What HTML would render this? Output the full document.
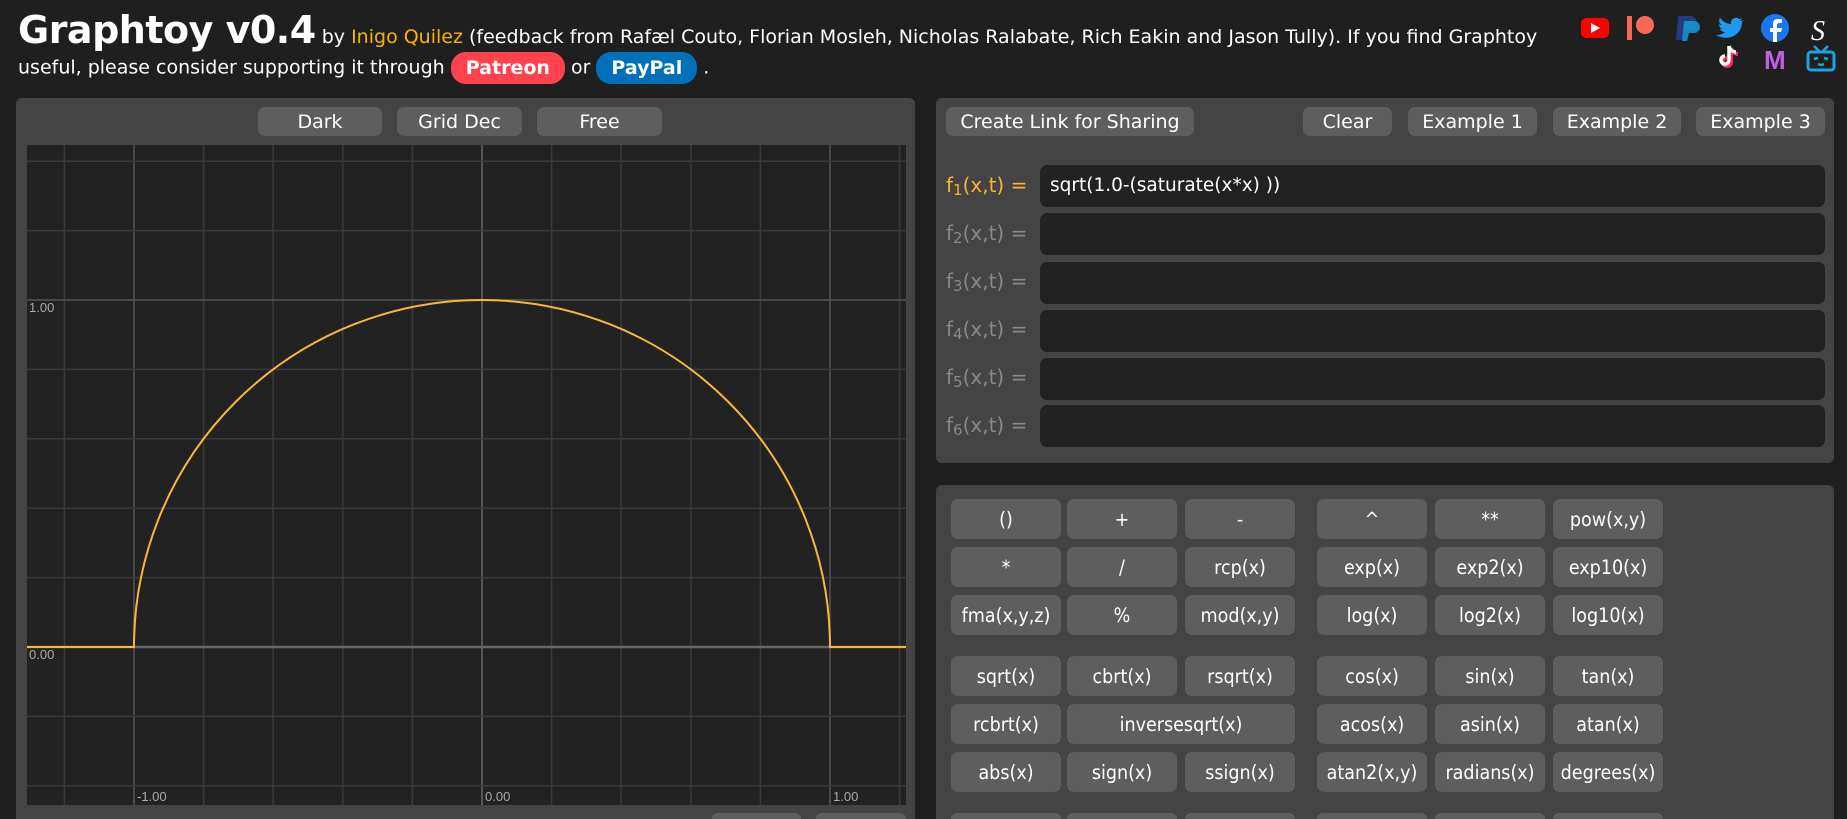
<!DOCTYPE html>
<html><head><meta charset="utf-8"><style>
*{box-sizing:border-box;margin:0;padding:0}
html{width:1847px;height:819px;overflow:hidden}
body{width:1847px;height:819px;background:#1f1f1f;overflow:hidden;font-family:"DejaVu Sans","Liberation Sans",sans-serif;color:#fff;position:relative}
.hdr{position:absolute;left:18px;top:15px;font-size:19px;line-height:30px;width:1560px}
.hdr b.t{font-size:38px;font-weight:bold;letter-spacing:-0.5px}
.or{color:#f8b500}
.pill{display:inline-block;border-radius:15px;padding:0 15px;font-weight:bold;line-height:32px;height:32px;vertical-align:middle}
.panel{position:absolute;background:#444;border-radius:6px}
.btn{position:absolute;background:#5e5e5e;border-radius:7px;color:#fff;font-size:19px;text-align:center;line-height:30px;height:29px}
.k{position:absolute;background:#5e5e5e;border-radius:7px;color:#fff;font-size:19.5px;text-align:center;line-height:41px;height:40px;width:110px;font-family:"DejaVu Sans Condensed","DejaVu Sans",sans-serif}
.lab{position:absolute;left:946px;font-size:20px;color:#888;font-family:"DejaVu Sans","Liberation Sans",sans-serif}
.lab sub{font-size:15px;vertical-align:-3px}
.inp{position:absolute;left:1040px;width:785px;height:42px;background:#222;border-radius:7px;font-size:18.5px;line-height:42px;padding-left:10px;font-family:"DejaVu Sans","Liberation Sans",sans-serif}
</style></head><body>
<div class="hdr"><b class="t">Graphtoy v0.4</b> by <span class="or">Inigo Quilez</span> (feedback from Rafæl Couto, Florian Mosleh, Nicholas Ralabate, Rich Eakin and Jason Tully). If you find Graphtoy<br>useful, please consider supporting it through <span class="pill" style="background:#ff424d">Patreon</span> or <span class="pill" style="background:#0070ba">PayPal</span> .</div>

<svg style="position:absolute;left:0;top:0" width="1847" height="80">
<rect x="1581" y="18" width="28" height="20" rx="5" fill="#f00"/><path d="M1591 23 L1600 28 L1591 33Z" fill="#fff"/>
<rect x="1627" y="16" width="5" height="24" fill="#f96854"/><circle cx="1645" cy="25" r="9" fill="#f96854"/>
<path d="M1678 16 h12 a7 7 0 0 1 0 14 h-6 l-2 10 h-6z" fill="#253b80"/><path d="M1684 21 h10 a6 6 0 0 1 0 12 h-5 l-2 8 h-5z" fill="#179bd7" opacity=".85"/>
<path d="M1744 20 c-2 1-3 1-4 1 c1-1 2-2 2-3 c-1 1-2 1-3 1 c-3-3-9 0-8 5 c-5 0-8-3-11-6 c-2 3 0 6 2 7 c-1 0-2 0-3-1 c0 3 2 5 4 5 c-1 0-2 0-3 0 c1 2 3 3 5 3 c-2 2-5 3-9 3 c12 7 26 0 26-13 c1-1 2-2 2-2z" fill="#1d9bf0"/>
<circle cx="1775" cy="28" r="14" fill="#1877f2"/><path d="M1777 42 v-10 h4 l1-4 h-5 v-3 c0-1 1-2 2-2 h3 v-4 h-4 c-4 0-5 2-5 5 v4 h-3 v4 h3 v10z" fill="#fff"/>
<text x="1811" y="40" font-family="Liberation Serif,serif" font-style="italic" font-size="28" fill="#fff">S</text>
<path d="M1731 48 v14 a4 4 0 1 1-4-4 M1731 48 c1 4 4 6 7 6" stroke="#fe2c55" stroke-width="4" fill="none"/>
<path d="M1729 46 v14 a4 4 0 1 1-4-4 M1729 46 c1 4 4 6 7 6" stroke="#fff" stroke-width="3.5" fill="none"/>
<text x="1764" y="69" font-family="Liberation Sans,sans-serif" font-weight="bold" font-size="26" fill="#c061e0">M</text>
<rect x="1808" y="52" width="26" height="18" rx="3" stroke="#1fa3e0" stroke-width="3" fill="none"/><path d="M1814 46 l5 5 M1828 46 l-5 5 M1814 59 l4-1 M1828 59 l-4-1 M1818 64 l3 1 l3-1" stroke="#1fa3e0" stroke-width="2.5" fill="none"/>
</svg>

<div class="panel" style="left:16px;top:98px;width:899px;height:721px;border-radius:6px 6px 0 0"></div>
<div class="btn" style="left:258px;top:107px;width:124px">Dark</div>
<div class="btn" style="left:397px;top:107px;width:125px">Grid Dec</div>
<div class="btn" style="left:537px;top:107px;width:125px">Free</div>
<svg style="position:absolute;left:27px;top:145px" width="879" height="660">
<rect width="879" height="660" fill="#222"/>
<g id="gx"></g>
<g fill="#aaa" font-family="Liberation Sans Narrow,Liberation Sans,sans-serif" font-size="13">
<text x="2" y="167">1.00</text><text x="2" y="514">0.00</text>
<text x="110" y="656">-1.00</text><text x="458" y="656">0.00</text><text x="806" y="656">1.00</text></g>
<path d="M0 502 H107 A348 347 0 0 1 803 502 H879" stroke="#f6b83a" stroke-width="2" fill="none"/>
</svg>
<script>
var s='';var ox=455,oy=502,u=69.6;
for(var k=-7;k<=6;k++){var x=ox+k*u;if(x<0||x>879)continue;var c=(k==0)?'#666':(k%5==0?'#555':'#3a3a3a');s+='<line x1="'+x+'" y1="0" x2="'+x+'" y2="660" stroke="'+c+'" stroke-width="1.5"/>';}
for(var k=-3;k<=8;k++){var y=oy-k*69.4;if(y<0||y>660)continue;var c=(k==0)?'#666':(k%5==0?'#555':'#3a3a3a');s+='<line x1="0" y1="'+y+'" x2="879" y2="'+y+'" stroke="'+c+'" stroke-width="'+(k==0?2.5:1.5)+'"/>';}
document.getElementById('gx').innerHTML=s;
</script>
<div class="btn" style="left:712px;top:813px;width:89px;height:6px;border-radius:7px 7px 0 0"></div>
<div class="btn" style="left:816px;top:813px;width:90px;height:6px;border-radius:7px 7px 0 0"></div>

<div class="panel" style="left:936px;top:98px;width:898px;height:365px"></div>
<div class="btn" style="left:946px;top:107px;width:248px">Create Link for Sharing</div>
<div class="btn" style="left:1303px;top:107px;width:89px">Clear</div>
<div class="btn" style="left:1408px;top:107px;width:129px">Example 1</div>
<div class="btn" style="left:1553px;top:107px;width:128px">Example 2</div>
<div class="btn" style="left:1696px;top:107px;width:129px">Example 3</div>
<div class="lab" style="top:173px;color:#f8b530">f<sub>1</sub>(x,t) =</div><div class="inp" style="top:165px">sqrt(1.0-(saturate(x*x) ))</div>
<div class="lab" style="top:221px">f<sub>2</sub>(x,t) =</div><div class="inp" style="top:213px"></div>
<div class="lab" style="top:269px">f<sub>3</sub>(x,t) =</div><div class="inp" style="top:262px"></div>
<div class="lab" style="top:317px">f<sub>4</sub>(x,t) =</div><div class="inp" style="top:310px"></div>
<div class="lab" style="top:365px">f<sub>5</sub>(x,t) =</div><div class="inp" style="top:358px"></div>
<div class="lab" style="top:413px">f<sub>6</sub>(x,t) =</div><div class="inp" style="top:405px"></div>

<div class="panel" style="left:936px;top:485px;width:898px;height:334px;border-radius:6px 6px 0 0"></div>
<div id="keys"></div>
<script>
var cols=[951,1067,1185,1317,1435,1553],rows=[499,547,595,656,704,752];
var L=[["()","+","-","^","**","pow(x,y)"],["*","/","rcp(x)","exp(x)","exp2(x)","exp10(x)"],["fma(x,y,z)","%","mod(x,y)","log(x)","log2(x)","log10(x)"],
["sqrt(x)","cbrt(x)","rsqrt(x)","cos(x)","sin(x)","tan(x)"],["rcbrt(x)","inversesqrt(x)",null,"acos(x)","asin(x)","atan(x)"],["abs(x)","sign(x)","ssign(x)","atan2(x,y)","radians(x)","degrees(x)"]];
var h='';for(var r=0;r<6;r++)for(var c=0;c<6;c++){var t=L[r][c];if(t===null)continue;var w=110;if(t=="inversesqrt(x)")w=228;h+='<div class="k" style="left:'+cols[c]+'px;top:'+rows[r]+'px;width:'+w+'px">'+t+'</div>';}
for(var c=0;c<6;c++)h+='<div class="k" style="left:'+cols[c]+'px;top:813px;height:6px;border-radius:7px 7px 0 0"></div>';
document.getElementById('keys').innerHTML=h;
</script>
</body></html>
